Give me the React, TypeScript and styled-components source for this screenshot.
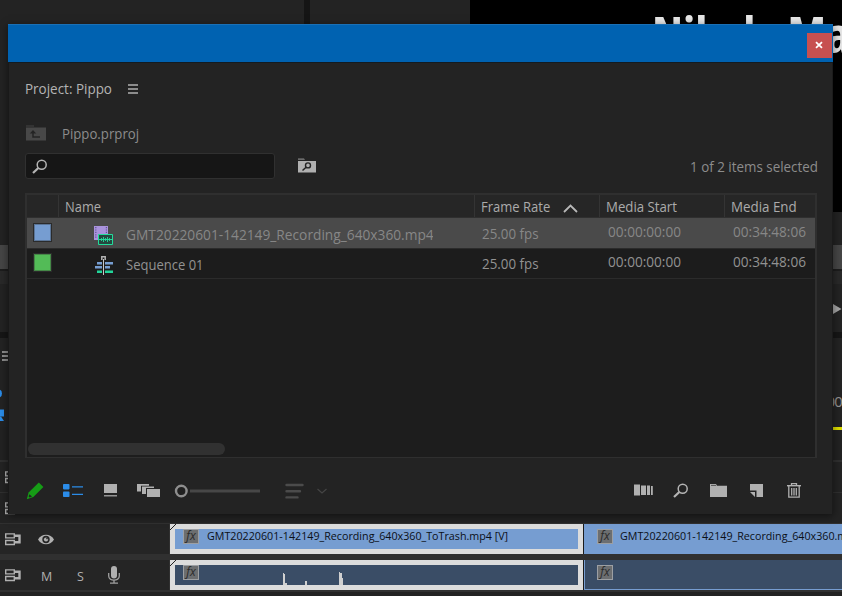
import React from "react";
import styled, { createGlobalStyle } from "styled-components";

const Global = createGlobalStyle`
  * { box-sizing: border-box; }
  body { margin: 0; background: #222; overflow: hidden; font-family: "Open Sans", "Noto Sans", sans-serif; }
  svg { display: block; flex: none; }
`;

const Desktop = styled.div`
  position: relative;
  display: flex;
  flex-direction: column;
  width: 842px;
  height: 596px;
  overflow: hidden;
  background: #222;
`;

/* ---------- workspace behind the floating panel ---------- */

const Monitors = styled.div`
  display: grid;
  grid-template-columns: 304px 6px 160px 1fr;
  flex: none;
  height: 212px;
  background: #151515;
`;
const MonitorPane = styled.div`
  background: #232323;
`;
const Splitter = styled.div`
  background: #151515;
`;
const Program = styled.div`
  background: #000;
  overflow: hidden;
`;
const Caption = styled.div`
  padding: 0 0 0 182px;
  white-space: nowrap;
  color: #e6e6e6;
  font-size: 50px;
  line-height: 68px;
  font-weight: 700;
  font-stretch: 80%;
`;
const Band = styled.div<{ $h: number; $bg: string }>`
  display: flex;
  flex: none;
  justify-content: space-between;
  align-items: center;
  height: ${(p) => p.$h}px;
  background: ${(p) => p.$bg};
`;
const EdgeCode = styled.span`
  display: flex;
  justify-content: flex-end;
  width: 22px;
  margin-left: auto;
  color: #959595;
  font-size: 15px;
  letter-spacing: -0.8px;
`;
const RangeBar = styled.div`
  width: 20px;
  height: 3px;
  margin-left: auto;
  background: #dede00;
`;

const Track = styled.div`
  display: grid;
  grid-template-columns: 170px 1fr;
  flex: none;
  height: 30px;
  background: #222;
`;
const TrackHead = styled.div`
  display: flex;
  align-items: center;
  padding-left: 5px;
  border-right: 1px solid #303030;
  background: #252525;
`;
const HeadCell = styled.div<{ $w: number }>`
  display: flex;
  justify-content: center;
  align-items: center;
  width: ${(p) => p.$w}px;
`;
const HeadLetter = styled.span`
  padding: 3px 0 0 1px;
  color: #b0b0b0;
  font: 12.5px/27px "Open Sans", sans-serif;
`;
const Clips = styled.div`
  display: grid;
  grid-template-columns: 413px 1fr;
  column-gap: 1px;
  background: #1b1b1b;
  overflow: hidden;
`;
const Clip = styled.div<{ $fill: string; $edge: string }>`
  display: flex;
  gap: 7px;
  min-width: 0;
  height: 30px;
  padding: 5px 0 0 12px;
  overflow: hidden;
  border: 0 solid ${(p) => p.$edge};
  border-left-width: 1px;
  border-bottom-width: 1px;
  background: ${(p) => p.$fill};
`;
const SelectedClip = styled(Clip)`
  gap: 8px;
  padding: 0 0 0 8px;
  border: 5px solid #dcdcdc;
`;
const ClipName = styled.span`
  white-space: nowrap;
  color: #0b0f16;
  font-size: 11px;
  line-height: 14px;
  transform: scaleX(0.974);
  transform-origin: 0 50%;
`;
const FxBadge = styled.span`
  flex: none;
  width: 16px;
  height: 15px;
  border: 1px solid #9c9fa3;
  background: #6c6e70;
  color: #2a2a2a;
  text-align: center;
  font: italic 12px/12px "Open Sans", sans-serif;
`;
const CornerMark = styled.svg`
  position: absolute;
  left: 170px;
  top: 0;
`;
const TrackStack = styled.div`
  position: relative;
  flex: none;
`;

/* ---------- project panel ---------- */

const Panel = styled.section`
  position: absolute;
  left: 8px;
  top: 24px;
  width: 825px;
  height: 490px;
  display: flex;
  flex-direction: column;
  background: #232323;
  border-left: 1px solid #191919;
  border-right: 1px solid #1b1b1b;
  box-shadow: 0 2px 8px rgba(0, 0, 0, 0.5);
`;
const TitleBar = styled.header`
  display: flex;
  justify-content: flex-end;
  align-items: flex-start;
  flex: none;
  height: 39px;
  margin: 0 -1px;
  padding: 8px 1px 0 0;
  background: #0062b1;
  border-top: 1px solid #1a70b6;
  border-bottom: 1px solid #131b21;
`;
const CloseButton = styled.button`
  display: flex;
  justify-content: center;
  align-items: center;
  width: 25px;
  height: 25px;
  padding: 0 1px 1px 0;
  border: 0;
  background: #c75050;
`;
const PanelRow = styled.div<{ $h: number; $gap: number }>`
  display: flex;
  align-items: center;
  flex: none;
  height: ${(p) => p.$h}px;
  gap: ${(p) => p.$gap}px;
  padding: 0 15px 0 16px;
`;
/* Narrowed text: $w is the drawn width, $k the horizontal scale. */
const Label = styled.span<{ $k: number; $w: number; $color: string }>`
  display: block;
  flex: none;
  width: ${(p) => p.$w / p.$k}px;
  margin-right: ${(p) => p.$w - p.$w / p.$k}px;
  transform: scaleX(${(p) => p.$k});
  transform-origin: 0 50%;
  white-space: nowrap;
  font-size: 15px;
  line-height: 20px;
  color: ${(p) => p.$color};
`;
const PanelTitle = styled(Label)`
  margin-top: -2px;
`;
const SearchBox = styled.div`
  display: flex;
  align-items: center;
  width: 250px;
  height: 26px;
  padding-left: 6px;
  background: #161616;
  border: 1px solid #303030;
  border-radius: 3px;
`;
const BinSlot = styled.div`
  padding-bottom: 2px;
`;
const PushRight = styled.div`
  display: flex;
  margin-left: auto;
`;
const Table = styled.div`
  display: flex;
  flex-direction: column;
  flex: none;
  width: 792px;
  height: 265px;
  margin: 13px 0 0 16px;
  background: #1d1d1d;
  border: 2px solid #2f2f2f;
  border-bottom-width: 1px;
`;
const columns = "32px 416px 125px 125px 1fr";
const HeadRow = styled.div`
  display: grid;
  grid-template-columns: ${columns};
  flex: none;
  height: 23px;
  background: #262626;
  border-bottom: 1px solid #2f2f2f;
`;
const HeadCol = styled.div`
  display: flex;
  align-items: center;
  gap: 13px;
  padding-left: 6px;
  border-right: 1px solid #343434;
  &:last-child { border-right: 0; }
`;
const SortMark = styled.span`
  padding-top: 5px;
`;
const ItemRow = styled.div<{ $active?: boolean }>`
  display: grid;
  grid-template-columns: ${columns};
  flex: none;
  height: ${(p) => (p.$active ? 30 : 31)}px;
  background: ${(p) => (p.$active ? "#4a4a4a" : "#1c1c1c")};
  box-shadow: ${(p) => (p.$active ? "none" : "inset 0 1px #2b2b2b, inset 0 -1px #2b2b2b")};
`;
const ItemCell = styled.div<{ $pad: number; $top: number }>`
  display: flex;
  align-items: flex-start;
  min-width: 0;
  padding: ${(p) => p.$top}px 0 0 ${(p) => p.$pad}px;
`;
const Swatch = styled.div<{ $c: string }>`
  width: 19px;
  height: 19px;
  background: ${(p) => p.$c};
  border: 1px solid #2b2b2b;
  box-shadow: inset 0 0 0 1px rgba(43, 43, 43, 0.35);
`;
const ItemName = styled.div`
  width: 307px;
  height: 22px;
  margin: -2px 0 0 12px;
  overflow: hidden;
`;
const ScrollThumb = styled.div`
  width: 197px;
  height: 12px;
  margin: auto 0 2px 1px;
  border-radius: 6px;
  background: #313131;
`;
const Toolbar = styled.footer`
  display: flex;
  align-items: center;
  height: 56px;
  padding: 9px 31px 0 17px;
`;
const Tool = styled.div<{ $w: number; $ml?: number }>`
  display: flex;
  align-items: center;
  width: ${(p) => p.$w}px;
  margin-left: ${(p) => p.$ml ?? 0}px;
`;
const ToolsRight = styled.div`
  display: flex;
  align-items: center;
  margin: -1px 0 0 auto;
`;

/* ---------- icons ---------- */

const MenuIcon = () => (
  <svg width="10" height="10" viewBox="0 0 10 10">
    <path d="M0 1h10M0 5h10M0 9h10" stroke="#b0b0b0" strokeWidth="1.4" />
  </svg>
);
const Magnifier = () => (
  <svg width="16" height="15" viewBox="0 0 16 15" fill="none" stroke="#b4b4b4">
    <circle cx="9.7" cy="5.7" r="4.5" strokeWidth="1.5" />
    <path d="M6.3 9 1 14" strokeWidth="2.2" />
  </svg>
);
const BinUp = () => (
  <svg width="20" height="16" viewBox="0 0 20 16">
    <path d="M0 .5h8v1H0z" fill="#454545" />
    <path d="M0 2.5h20V15.5H0z" fill="#484848" />
    <path d="M7 6v6h7" fill="none" stroke="#242424" strokeWidth="1.5" />
    <path d="M3.8 8.5 7 5l3.2 3.5z" fill="#242424" />
  </svg>
);
const SearchBin = () => (
  <svg width="18" height="15" viewBox="0 0 18 15">
    <path d="M0 .5h6l1 1.3H0z" fill="#858585" />
    <path d="M0 3h18v11.5H0z" fill="#b0b0b0" />
    <circle cx="10" cy="7.4" r="2.5" fill="none" stroke="#242424" strokeWidth="1.4" />
    <path d="m8.1 9.2-3.6 3.3" stroke="#242424" strokeWidth="1.5" />
  </svg>
);
const CloseGlyph = () => (
  <svg width="8" height="8" viewBox="0 0 8 8">
    <path d="m1 1.2 6 5.6M7 1.2 1 6.8" stroke="#fff" strokeWidth="1.8" />
  </svg>
);
const SortUp = () => (
  <svg width="15" height="9" viewBox="0 0 15 9">
    <path d="M1 8 7.5 1.5 14 8" fill="none" stroke="#b8b8b8" strokeWidth="1.8" />
  </svg>
);
const MovieIcon = () => (
  <svg width="20" height="20" viewBox="0 0 20 20">
    <path d="M0 0h14v14H0z" fill="#a993dc" />
    <path d="M1.8 1v12M12.4 1v6" stroke="#654f96" strokeWidth="1.2" strokeDasharray="1.2 1.2" />
    <path d="M4.5 8.5h14v10h-14z" fill="#254840" stroke="#22dc9b" />
    <path d="M5 13.5h13" stroke="#22dc9b" strokeWidth="1" />
    <path d="M7.5 12v3M9.5 11v5M11.5 12v3M13.5 11v5M15.5 12v3" stroke="#22dc9b" strokeWidth=".9" />
  </svg>
);
const SequenceIcon = () => (
  <svg width="20" height="20" viewBox="0 0 20 20">
    <path d="M3 6h5v2.5H3zm8 0h8v2.5h-8zM1 10h7v2.5H1zm10 0h5v2.5h-5z" fill="#769dd1" />
    <path d="M3 14.5h5V17H3zm8 0h8V17h-8z" fill="#22d69a" />
    <path d="M7.8 4V.8h3.4V4" fill="none" stroke="#b4b4b4" strokeWidth="1.5" />
    <path d="M9.5 3v16" stroke="#c6c6c6" strokeWidth="1" />
  </svg>
);
const Pencil = () => (
  <svg width="18" height="18" viewBox="0 0 18 18">
    <path d="M.8 17.2 2.6 10.6 12.8.6l4.6 4.4L7.4 15z" fill="#169c16" />
    <path d="m3.4 12.2 2.6 2.3-2.4 1-1-1z" fill="#232323" />
  </svg>
);
const ListView = () => (
  <svg width="20" height="13" viewBox="0 0 20 13" fill="#2b8ce8">
    <rect width="6.5" height="5.4" rx=".8" />
    <rect y="7.6" width="6.5" height="5.4" rx=".8" />
    <path d="M9 2.3h11v1.2H9zM9 9.8h11V11H9z" />
  </svg>
);
const IconView = () => (
  <svg width="13" height="13" viewBox="0 0 13 13" fill="#b0b0b0">
    <path d="M0 0h13v9H0z" />
    <path d="M0 11h13v1.5H0z" opacity=".8" />
  </svg>
);
const Freeform = () => (
  <svg width="23" height="13" viewBox="0 0 23 13" fill="#b0b0b0">
    <path d="M0 0h12v1.7H4v5.8H0zM5 2.5h12V4H9v6H5zM10 5h13v8H10z" />
  </svg>
);
const Zoomer = () => (
  <svg width="86" height="14" viewBox="0 0 86 14">
    <path d="M16 7h70" stroke="#474747" strokeWidth="3" />
    <circle cx="7.3" cy="7" r="5.3" fill="#202020" stroke="#8e8e8e" strokeWidth="2.4" />
  </svg>
);
const SortMenu = () => (
  <svg width="19" height="16" viewBox="0 0 19 16" stroke="#4b4b4b" strokeWidth="2.4" strokeLinecap="round">
    <path d="M1.5 2h16M1.5 8.2h13.5M1.5 14.4h11" />
  </svg>
);
const ChevronDown = () => (
  <svg width="10" height="6" viewBox="0 0 10 6">
    <path d="m.5 1 4.5 4L9.5 1" fill="none" stroke="#454545" strokeWidth="1.2" />
  </svg>
);
const AutomateIcon = () => (
  <svg width="19" height="12" viewBox="0 0 19 12" fill="#b0b0b0">
    <path d="M0 .5h6v11H0zM7 1.5h5v9.5H7zM13 1.5h3v9.5h-3zM17 2h1.8v9H17z" />
  </svg>
);
const Folder = () => (
  <svg width="17" height="13" viewBox="0 0 17 13" fill="#b0b0b0">
    <path d="M0 0h6l1 1.8h10V13H0z" />
    <path d="M1 1.4h5" stroke="#3a3a3a" strokeWidth=".8" />
  </svg>
);
const NewItem = () => (
  <svg width="13" height="13" viewBox="0 0 13 13" fill="#b0b0b0">
    <path d="M0 0h13v13H6.5V6.5H0zM0 8h5v5z" />
  </svg>
);
const Trash = () => (
  <svg width="14" height="15" viewBox="0 0 14 15" fill="none" stroke="#b0b0b0">
    <path d="M0 2.7h14" strokeWidth="1.4" />
    <path d="M4.5 2.5V.7h5v1.8M1.8 3v11.2h10.4V3M4.7 5v7.5M7 5v7.5M9.3 5v7.5" strokeWidth="1.3" />
  </svg>
);
const SourcePatch = () => (
  <svg width="16" height="13" viewBox="0 0 16 13" fill="none" stroke="#b0b0b0" strokeWidth="1.4">
    <path d="M.7.9h8.6v4H.7zM.7 7.5h8.6v4H.7z" />
    <path d="M9.5 2.8h5v6.4h-5" strokeWidth="2.4" />
  </svg>
);
const Eye = () => (
  <svg width="16" height="11" viewBox="0 0 16 11">
    <path d="M0 5.5C3-.9 13-.9 16 5.5 13 11.9 3 11.9 0 5.5z" fill="#b0b0b0" />
    <circle cx="8" cy="5.5" r="3.7" fill="#252525" />
    <circle cx="8" cy="5.5" r="2.1" fill="#b0b0b0" />
    <circle cx="9" cy="4.6" r=".8" fill="#252525" />
  </svg>
);
const Mic = () => (
  <svg width="12" height="18" viewBox="0 0 12 18">
    <rect x="3" width="6" height="12.5" rx="3" fill="#b0b0b0" />
    <path d="M.7 7v3c0 5.5 10.6 5.5 10.6 0V7M6 14v3M2 17.2h8" fill="none" stroke="#a0a0a0" strokeWidth="1.3" />
  </svg>
);
const PlayTip = () => (
  <svg width="9" height="12" viewBox="0 0 9 12">
    <path d="M0 2 8.5 7 0 12z" fill="#a5a5a5" />
  </svg>
);
const EdgeTools = () => (
  <svg width="8" height="42" viewBox="0 0 8 42" fill="#2b8ce8">
    <ellipse cx="-1" cy="13.5" rx="3" ry="4" />
    <path d="M0 29.5h4v7H0zM1 36.5l3 4.5H0v-4z" />
  </svg>
);
const Wave = styled.svg`
  margin: 7px 0 0 76px;
`;

const dim = "#8c8c8c";
const head = "#ababab";

const items = [
  { active: true, color: "#769dd1", icon: <MovieIcon />, name: "GMT20220601-142149_Recording_640x360.mp4", k: 0.916, w: 310, text: "#878787" },
  { active: false, color: "#53bb57", icon: <SequenceIcon />, name: "Sequence 01", k: 0.868, w: 77, text: "#929292" },
];

export default function App() {
  return (
    <>
      <Global />
      <Desktop>
        <Monitors>
          <MonitorPane />
          <Splitter />
          <MonitorPane />
          <Program>
            <Caption>Nikola Ma</Caption>
          </Program>
        </Monitors>
        <Band $h={33} $bg="#232323" />
        <Band $h={24} $bg="#464646" />
        <Band $h={2} $bg="#1d1d1d" />
        <Band $h={13} $bg="#292929" />
        <Band $h={48} $bg="#232323">
          <PushRight><PlayTip /></PushRight>
        </Band>
        <Band $h={6} $bg="#161616" />
        <Band $h={36} $bg="#232323"><Tool $w={12} $ml={2}><MenuIcon /></Tool></Band>
        <Band $h={53} $bg="#232323">
          <EdgeTools />
          <EdgeCode>00</EdgeCode>
        </Band>
        <Band $h={3} $bg="#222"><RangeBar /></Band>
        <Band $h={30} $bg="#222" />
        <Band $h={2} $bg="#303030" />
        <Band $h={30} $bg="#232323"><Tool $w={16} $ml={5}><SourcePatch /></Tool></Band>
        <Band $h={1} $bg="#303030" />
        <Band $h={30} $bg="#232323"><Tool $w={16} $ml={5}><SourcePatch /></Tool></Band>
        <Band $h={1} $bg="#303030" />
        <TrackStack>
          <Track>
            <TrackHead>
              <HeadCell $w={16}><SourcePatch /></HeadCell>
              <HeadCell $w={50}><Eye /></HeadCell>
            </TrackHead>
            <Clips>
              <SelectedClip $fill="#769dd1" $edge="#dcdcdc">
                <FxBadge>fx</FxBadge>
                <ClipName>GMT20220601-142149_Recording_640x360_ToTrash.mp4 [V]</ClipName>
              </SelectedClip>
              <Clip $fill="#769dd1" $edge="#769dd1">
                <FxBadge>fx</FxBadge>
                <ClipName>GMT20220601-142149_Recording_640x360.mp4 [V]</ClipName>
              </Clip>
            </Clips>
          </Track>
          <Band $h={6} $bg="#303030" />
          <Track>
            <TrackHead>
              <HeadCell $w={16}><SourcePatch /></HeadCell>
              <HeadCell $w={50}><HeadLetter>M</HeadLetter></HeadCell>
              <HeadCell $w={18}><HeadLetter>S</HeadLetter></HeadCell>
              <HeadCell $w={50}><Mic /></HeadCell>
            </TrackHead>
            <Clips>
              <SelectedClip $fill="#3a4d66" $edge="#dcdcdc">
                <FxBadge>fx</FxBadge>
                <Wave width="70" height="14" viewBox="0 0 70 14" fill="#d0d0d0">
                  <path d="M0 14V1h1v1h1v9h2v3zM19 14v-1h1v1zM22 14V9h2v5zM56 14V0h1v1h2v5h1v7h1v1z" />
                </Wave>
              </SelectedClip>
              <Clip $fill="#3a4d66" $edge="#769dd1">
                <FxBadge>fx</FxBadge>
              </Clip>
            </Clips>
          </Track>
          <CornerMark width="6" height="66" viewBox="0 0 6 66">
            <path d="M0 6 6 0M0 42l6-6" stroke="#222" />
          </CornerMark>
        </TrackStack>
        <Band $h={2} $bg="#303030" />

        <Panel>
          <TitleBar>
            <CloseButton aria-label="Close"><CloseGlyph /></CloseButton>
          </TitleBar>
          <PanelRow $h={51} $gap={16}>
            <PanelTitle $k={0.897} $w={87} $color="#b4b4b4">Project: Pippo</PanelTitle>
            <MenuIcon />
          </PanelRow>
          <PanelRow $h={38} $gap={16}>
            <Tool $w={20} $ml={1}><BinUp /></Tool>
            <Label $k={0.88} $w={77} $color={dim}>Pippo.prproj</Label>
          </PanelRow>
          <PanelRow $h={28} $gap={23}>
            <SearchBox><Magnifier /></SearchBox>
            <BinSlot><SearchBin /></BinSlot>
            <PushRight><Label $k={0.893} $w={127} $color={dim}>1 of 2 items selected</Label></PushRight>
          </PanelRow>
          <Table>
            <HeadRow>
              <HeadCol />
              <HeadCol><Label $k={0.86} $w={36} $color={head}>Name</Label></HeadCol>
              <HeadCol><Label $k={0.868} $w={69} $color={head}>Frame Rate</Label><SortMark><SortUp /></SortMark></HeadCol>
              <HeadCol><Label $k={0.882} $w={71} $color={head}>Media Start</Label></HeadCol>
              <HeadCol><Label $k={0.89} $w={66} $color={head}>Media End</Label></HeadCol>
            </HeadRow>
            {items.map((it) => (
              <ItemRow key={it.name} $active={it.active}>
                <ItemCell $pad={6} $top={5}><Swatch $c={it.color} /></ItemCell>
                <ItemCell $pad={35} $top={8}>
                  {it.icon}
                  <ItemName><Label $k={it.k} $w={it.w} $color={it.text}>{it.name}</Label></ItemName>
                </ItemCell>
                <ItemCell $pad={7} $top={5}><Label $k={0.89} $w={57} $color={it.text}>25.00 fps</Label></ItemCell>
                <ItemCell $pad={8} $top={3}><Label $k={0.907} $w={73} $color={it.text}>00:00:00:00</Label></ItemCell>
                <ItemCell $pad={8} $top={3}><Label $k={0.907} $w={73} $color={it.text}>00:34:48:06</Label></ItemCell>
              </ItemRow>
            ))}
            <ScrollThumb />
          </Table>
          <Toolbar>
            <Tool $w={18}><Pencil /></Tool>
            <Tool $w={20} $ml={19}><ListView /></Tool>
            <Tool $w={13} $ml={21}><IconView /></Tool>
            <Tool $w={23} $ml={20}><Freeform /></Tool>
            <Tool $w={86} $ml={14}><Zoomer /></Tool>
            <Tool $w={19} $ml={25}><SortMenu /></Tool>
            <Tool $w={10} $ml={13}><ChevronDown /></Tool>
            <ToolsRight>
              <Tool $w={19}><AutomateIcon /></Tool>
              <Tool $w={16} $ml={20}><Magnifier /></Tool>
              <Tool $w={17} $ml={21}><Folder /></Tool>
              <Tool $w={13} $ml={23}><NewItem /></Tool>
              <Tool $w={14} $ml={24}><Trash /></Tool>
            </ToolsRight>
          </Toolbar>
        </Panel>
      </Desktop>
    </>
  );
}
